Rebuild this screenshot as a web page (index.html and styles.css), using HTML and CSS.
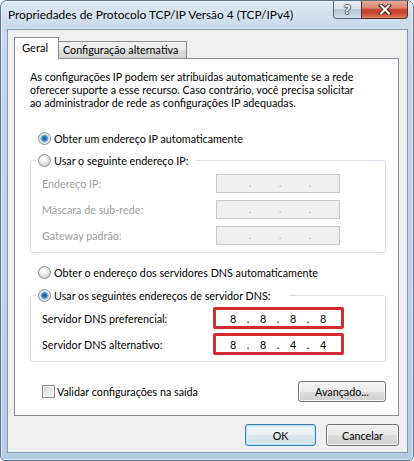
FILE: index.html
```html
<!DOCTYPE html>
<html lang="pt-BR">
<head>
<meta charset="utf-8">
<title>Propriedades de Protocolo TCP/IP Versão 4 (TCP/IPv4)</title>
<link rel="stylesheet" href="styles.css">
</head>
<body>
<div class="window">
  <div class="titlebar">
    <span class="title">Propriedades de Protocolo TCP/IP Versão 4 (TCP/IPv4)</span>
    <div class="caption-buttons">
      <span class="cap-btn cap-help">?</span>
      <span class="cap-btn cap-close">
        <svg width="14" height="11" viewBox="0 0 14 11" aria-hidden="true">
          <path d="M3 1.5 L11 9.5 M11 1.5 L3 9.5" stroke="#43241c" stroke-width="4" stroke-linecap="square"/>
          <path d="M3 1.5 L11 9.5 M11 1.5 L3 9.5" stroke="#ffffff" stroke-width="2" stroke-linecap="square"/>
        </svg>
      </span>
    </div>
  </div>
  <div class="client">
    <div class="tabs">
      <div class="tab tab-active">Geral</div>
      <div class="tab">Configuração alternativa</div>
    </div>
    <div class="panel">
      <p class="intro">As configurações IP podem ser atribuídas automaticamente se a rede<br>oferecer suporte a esse recurso. Caso contrário, você precisa solicitar<br>ao administrador de rede as configurações IP adequadas.</p>

      <div class="option"><span class="radio radio-checked"></span>Obter um endereço IP automaticamente</div>

      <fieldset class="group group-ip">
        <legend class="group-title group-title-ip"><span class="radio"></span>Usar o seguinte endereço IP:</legend>
        <div class="field field-disabled">
          <span class="field-label">Endereço IP:</span>
          <span class="ip-box ip-disabled"><span class="seg"></span><span class="dot">.</span><span class="seg"></span><span class="dot">.</span><span class="seg"></span><span class="dot">.</span><span class="seg"></span></span>
        </div>
        <div class="field field-disabled">
          <span class="field-label">Máscara de sub-rede:</span>
          <span class="ip-box ip-disabled"><span class="seg"></span><span class="dot">.</span><span class="seg"></span><span class="dot">.</span><span class="seg"></span><span class="dot">.</span><span class="seg"></span></span>
        </div>
        <div class="field field-disabled">
          <span class="field-label">Gateway padrão:</span>
          <span class="ip-box ip-disabled"><span class="seg"></span><span class="dot">.</span><span class="seg"></span><span class="dot">.</span><span class="seg"></span><span class="dot">.</span><span class="seg"></span></span>
        </div>
      </fieldset>

      <div class="option option-dns"><span class="radio"></span>Obter o endereço dos servidores DNS automaticamente</div>

      <fieldset class="group group-dns">
        <legend class="group-title group-title-dns"><span class="radio radio-checked"></span>Usar os seguintes endereços de servidor DNS:</legend>
        <div class="field field-dns">
          <span class="field-label">Servidor DNS preferencial:</span>
          <span class="ip-box ip-dns"><span class="seg">8</span><span class="dot">.</span><span class="seg">8</span><span class="dot">.</span><span class="seg">8</span><span class="dot">.</span><span class="seg">8</span></span>
        </div>
        <div class="field field-dns">
          <span class="field-label">Servidor DNS alternativo:</span>
          <span class="ip-box ip-dns"><span class="seg">8</span><span class="dot">.</span><span class="seg">8</span><span class="dot">.</span><span class="seg">4</span><span class="dot">.</span><span class="seg">4</span></span>
        </div>
      </fieldset>

      <div class="check-row">
        <span class="checkbox"></span>
        <span class="check-label">Validar configurações na saída</span>
        <button class="btn btn-advanced" type="button">Avançado...</button>
      </div>
    </div>
    <div class="dialog-buttons">
      <button class="btn btn-default btn-ok" type="button">OK</button>
      <button class="btn btn-cancel" type="button">Cancelar</button>
    </div>
  </div>
</div>
</body>
</html>
```
FILE: styles.css
```css
html, body {
  margin: 0;
  padding: 0;
  background: #ffffff;
}

body {
  font-family: Lato, "Liberation Sans", Arial, sans-serif;
  font-size: 10.75px;
  color: #000;
}

.window {
  box-sizing: border-box;
  width: 414px;
  height: 461px;
  border: 1px solid #5f7389;
  border-radius: 7px 7px 5px 5px;
  padding: 0 5px 7px 6px;
  background: linear-gradient(to bottom, #dde8f4 0px, #cddcee 20px, #c3d6ec 60px, #bcd2ea 300px, #b5cce7 100%);
  box-shadow: inset 0 0 0 1px rgba(255, 255, 255, 0.55);
  display: flex;
  flex-direction: column;
}

/* title bar */
.titlebar {
  height: 28px;
  display: flex;
  align-items: flex-start;
  flex: none;
}

.title {
  font-size: 11.9px;
  line-height: 28px;
  padding-left: 1px;
  color: #000;
  text-shadow: 0 0 6px rgba(255, 255, 255, 0.9);
  white-space: nowrap;
}

.caption-buttons {
  margin-left: auto;
  margin-right: 0;
  display: flex;
  height: 18px;
}

.cap-btn {
  box-sizing: border-box;
  height: 18px;
  border: 1px solid #56687d;
  border-top: none;
  display: flex;
  align-items: center;
  justify-content: center;
}

.cap-help {
  width: 28px;
  border-right: none;
  border-radius: 0 0 0 4px;
  background: linear-gradient(to bottom, #e9eff6 0%, #d5e0ec 45%, #b7c8da 50%, #c3d3e3 80%, #d6e2ee 100%);
  font-family: "DejaVu Sans", sans-serif;
  font-weight: bold;
  font-size: 12px;
  color: #fff;
  text-shadow: -1px 0 0 #4b5b6c, 1px 0 0 #4b5b6c, 0 -1px 0 #4b5b6c, 0 1px 0 #4b5b6c;
  line-height: 16px;
}

.cap-close {
  width: 47px;
  border-radius: 0 0 4px 0;
  border-color: #5b2d24;
  background: linear-gradient(to bottom, #e9aa9b 0%, #dc8572 40%, #c7412a 52%, #c94a30 75%, #de8a6a 100%);
}

.cap-close svg {
  display: block;
}

/* client area */
.client {
  box-sizing: border-box;
  flex: 1;
  border: 1px solid #8198b2;
  background: #f0f0f0;
  padding: 7px 8px 6px 6px;
  display: flex;
  flex-direction: column;
}

.tabs {
  display: flex;
  height: 21px;
  align-items: flex-start;
  flex: none;
}

.tab {
  box-sizing: border-box;
  border: 1px solid #898c95;
  border-bottom: none;
  white-space: nowrap;
}

.tab-active {
  position: relative;
  z-index: 1;
  width: 45px;
  height: 22px;
  background: #ffffff;
  padding-left: 7px;
  line-height: 19px;
  font-size: 11.2px;
}

.tab:not(.tab-active) {
  width: 128px;
  height: 17px;
  margin-top: 4px;
  border-left: none;
  padding-left: 4px;
  line-height: 16px;
  background: linear-gradient(to bottom, #f2f2f2 0%, #ebebeb 50%, #dddddd 51%, #d4d4d4 100%);
}

.panel {
  box-sizing: border-box;
  height: 358px;
  flex: none;
  border: 1px solid #898c95;
  background: #ffffff;
  padding: 11px 12px 0 15px;
}

.intro {
  margin: 0;
  line-height: 13px;
  white-space: nowrap;
}

.option {
  display: flex;
  align-items: center;
  height: 18px;
  margin: 20px 0 0 8px;
  white-space: nowrap;
}

.option-dns {
  margin-top: 10px;
}

.radio {
  box-sizing: border-box;
  width: 13px;
  height: 13px;
  flex: none;
  border-radius: 50%;
  border: 1px solid #8a8d92;
  margin-right: 3px;
  background: radial-gradient(circle at 40% 35%, #ffffff 0px, #f1f1f1 3px, #d6d6d6 7px, #c4c4c4 100%);
}

.radio-checked {
  background: radial-gradient(circle at 50% 50%, #1b4f86 0px, #2a6cb0 1.5px, #58a0dc 3px, #b9d7ef 4px, #f3f3f3 4.6px, #e4e4e4 5.5px, #cfcfcf 100%);
}

.group {
  margin: 4px 0 0 0;
  padding: 1px 0 4px 0;
  border: 1px solid #d5dfe5;
  border-radius: 3px;
  min-width: 0;
}

.group-title {
  display: flex;
  align-items: center;
  height: 18px;
  margin-left: 5px;
  padding: 0 8px 0 2px;
  white-space: nowrap;
}

.group-title-dns {
  padding-right: 19px;
}

.group-dns {
  margin-top: 5px;
}

.field {
  display: flex;
  align-items: center;
  height: 26px;
  padding-left: 11px;
}

.field-label {
  width: 174px;
  flex: none;
  white-space: nowrap;
}

.field-disabled .field-label {
  color: #9d9d9d;
}

.ip-box {
  box-sizing: border-box;
  display: flex;
  align-items: center;
}

.ip-disabled {
  width: 124px;
  height: 19px;
  border: 1px solid #cacaca;
  background: #efefef;
  padding-left: 6px;
  color: #9a9a9a;
}

.ip-dns {
  width: 131px;
  height: 22px;
  margin-left: -3px;
  border: 3px solid #d42a30;
  border-radius: 2px;
  background: #ffffff;
  padding-left: 5px;
  color: #000;
}

.seg {
  width: 24px;
  text-align: center;
  flex: none;
}

.dot {
  width: 6px;
  text-align: center;
  flex: none;
}

.ip-disabled .dot {
  font-size: 9px;
}

.check-row {
  display: flex;
  align-items: center;
  height: 21px;
  margin-top: 19px;
  padding-left: 12px;
}

.checkbox {
  box-sizing: border-box;
  width: 13px;
  height: 13px;
  flex: none;
  border: 1px solid #8a8d92;
  margin-right: 2px;
  background: linear-gradient(135deg, #d0d0d0 0%, #e6e6e6 45%, #fbfbfb 100%);
  box-shadow: inset 0 0 0 1px #f6f6f6;
}

.check-label {
  white-space: nowrap;
}

.btn {
  box-sizing: border-box;
  font-family: inherit;
  font-size: 10.75px;
  color: #000;
  border: 1px solid #707070;
  border-radius: 3px;
  background: linear-gradient(to bottom, #f2f2f2 0%, #ebebeb 50%, #dddddd 51%, #cfcfcf 100%);
  box-shadow: inset 0 0 0 1px #fbfbfb;
  padding: 0;
  margin: 0;
  text-align: center;
}

.btn-advanced {
  margin-left: auto;
  width: 88px;
  height: 21px;
}

.dialog-buttons {
  display: flex;
  justify-content: flex-end;
  gap: 10px;
  margin-top: 8px;
  height: 22px;
  flex: none;
}

.btn-ok {
  width: 71px;
  height: 22px;
}

.btn-cancel {
  width: 73px;
  height: 22px;
}

.btn-default {
  border-color: #3c7fb1;
  box-shadow: inset 0 0 0 1px #b4e4f8, inset 0 0 2px 2px #d8f1fb;
  background: linear-gradient(to bottom, #f2f7fa 0%, #eaf1f5 50%, #dbe6ec 51%, #cfdde4 100%);
}
```
